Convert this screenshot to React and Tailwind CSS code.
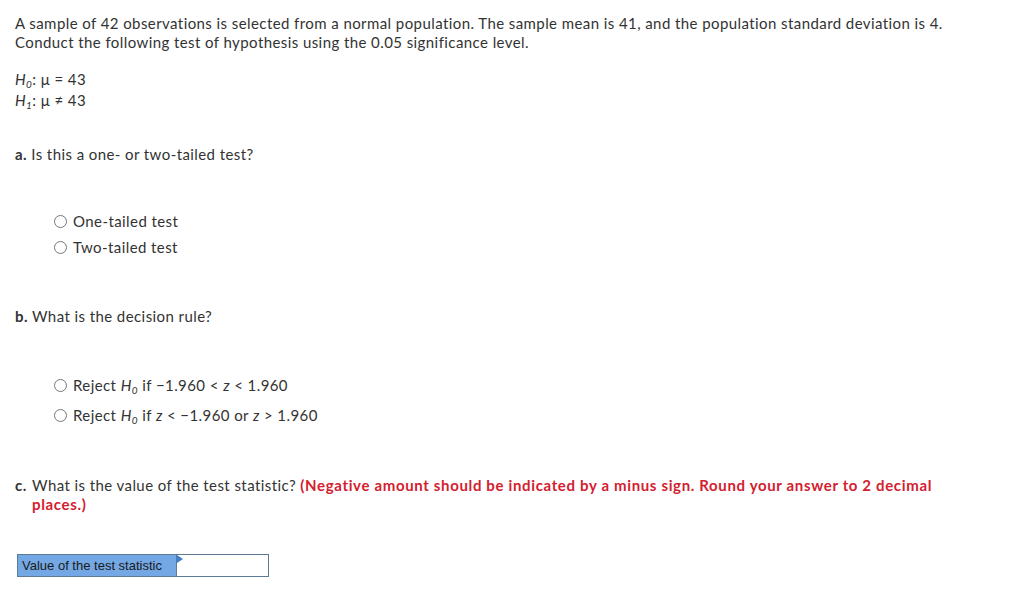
import React from "react";

function Radio({ children, className = "" }) {
  return (
    <div className={`flex items-center ${className}`}>
      <span className="inline-block w-[13px] h-[13px] rounded-full border border-[#777] bg-white mr-[6px]"></span>
      <span>{children}</span>
    </div>
  );
}

function H({ sub }) {
  return (
    <span>
      <i>H</i>
      <sub className="text-[10px] italic">{sub}</sub>
    </span>
  );
}

export default function App() {
  return (
    <div
      className="w-[1026px] h-[612px] bg-white text-[#333] text-[15px] leading-[19px] tracking-[0.42px] pl-[15px] pr-[60px] pt-[14px]"
      style={{ fontFamily: "Lato, 'Open Sans', sans-serif" }}
    >
      <p>
        A sample of 42 observations is selected from a normal population. The sample mean is 41, and the population standard deviation is 4.
        <br />
        Conduct the following test of hypothesis using the 0.05 significance level.
      </p>
      <div className="mt-[17px] leading-[21px]">
        <div>
          <H sub="0" />: μ = 43
        </div>
        <div>
          <H sub="1" />: μ ≠ 43
        </div>
      </div>
      <p className="mt-[34px]">
        <b>a.</b> Is this a one- or two-tailed test?
      </p>
      <div className="ml-[39px] mt-[44px] leading-[26px]">
        <Radio>One-tailed test</Radio>
        <Radio>Two-tailed test</Radio>
      </div>
      <p className="mt-[47px]">
        <b>b.</b> What is the decision rule?
      </p>
      <div className="ml-[39px] mt-[44px] leading-[30px]">
        <Radio>
          Reject <H sub="0" /> if −1.960 &lt; <i>z</i> &lt; 1.960
        </Radio>
        <Radio>
          Reject <H sub="0" /> if <i>z</i> &lt; −1.960 or <i>z</i> &gt; 1.960
        </Radio>
      </div>
      <div className="mt-[46px] flex">
        <b className="w-[17px] shrink-0">c.</b>
        <p>
          What is the value of the test statistic?{" "}
          <b className="text-[#d3202f] tracking-[0.65px]">
            (Negative amount should be indicated by a minus sign. Round your answer to 2 decimal places.)
          </b>
        </p>
      </div>
      <div className="mt-[40px] ml-[2px] flex w-[252px] h-[23px] border border-[#5d7a96] tracking-normal">
        <div
          className="w-[159px] bg-[#74a8e4] border-r border-[#5d7a96] flex items-center pl-[4px] text-[13px] text-[#1a1a1a]"
          style={{ fontFamily: "'Liberation Sans', Arial, sans-serif" }}
        >
          Value of the test statistic
        </div>
        <div className="relative flex-1 bg-white">
          <span className="absolute left-0 top-0 w-0 h-0 border-t-[4px] border-b-[4px] border-l-[6px] border-t-transparent border-b-transparent border-l-[#3b7ed3]"></span>
        </div>
      </div>
    </div>
  );
}
